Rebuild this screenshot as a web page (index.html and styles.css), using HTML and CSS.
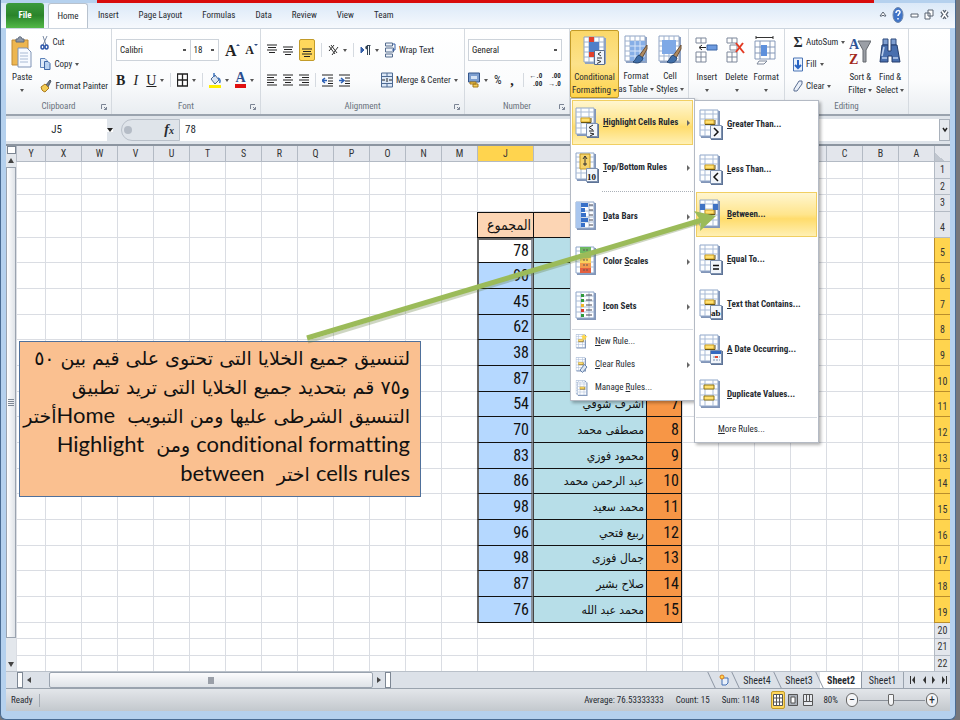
FILE: index.html
```html
<!DOCTYPE html>
<html lang="en">
<head>
    <meta charset="UTF-8">
    <meta name="viewport" content="width=device-width, initial-scale=1.0">
    <title>Conditional Formatting - Between</title>
    <link rel="stylesheet" href="styles.css">
</head>
<body>
    <svg class="defs" width="0" height="0" aria-hidden="true">
        <!-- small sheet used by all the rule icons -->
        <symbol id="sheet" viewBox="0 0 24 32">
            <path d="M2 2h19v27H2z" fill="#8296b8"/>
            <path d="M1 1h18v26H1z" fill="#fdfeff" stroke="#8fa6c9"/>
            <path d="M1 5h18M1 10h18M1 16h18M1 21h18M6 1v26M14 1v26" stroke="#a9bbd6" fill="none"/>
        </symbol>
        <symbol id="cell" viewBox="0 0 24 32">
            <use href="#sheet"/>
            <path d="M6 11h9v4H6z" fill="#ffe070" stroke="#d0a020"/>
            <path d="M6 15.500h10V11" stroke="#6b5510" fill="none"/>
        </symbol>
        <symbol id="badge" viewBox="0 0 24 32">
            <path d="M12 17h12v14H12z" fill="#5d7396"/>
            <path d="M11.500 16.500h11v13h-11z" fill="#f2f6fb" stroke="#7d90ae"/>
        </symbol>
        <symbol id="table" viewBox="0 0 24 30">
            <path d="M2 2h21v26H2z" fill="#8fa3c4"/>
            <path d="M1 1h20v25H1z" fill="#fff" stroke="#90a4c4"/>
            <path d="M1 6h20M1 11h20M1 16h20M1 21h20M6 1v25M11 1v25M16 1v25" stroke="#9fb2cf" fill="none"/>
        </symbol>
        <symbol id="brush" viewBox="0 0 24 30">
            <path d="M23 10L15 21l3 2 5-9z" fill="#b08b60" stroke="#6b5138"/>
            <path d="M15 20c-3 1-3 5-6 7 4 2 9 1 10-4z" fill="#3f6ea8" stroke="#27466f"/>
        </symbol>
        <symbol id="launch" viewBox="0 0 6 6">
            <path d="M.5 5V.5H5M3 3l2.500 2.500M5.500 3v2.500H3" stroke="#7b8494" fill="none"/>
        </symbol>
    </svg>

    <div class="window">
        <div class="redline"></div>
        <nav class="tabs">
            <button class="file">File</button>
            <button class="tab active">Home</button>
            <button class="tab">Insert</button>
            <button class="tab">Page Layout</button>
            <button class="tab">Formulas</button>
            <button class="tab">Data</button>
            <button class="tab">Review</button>
            <button class="tab">View</button>
            <button class="tab">Team</button>
            <svg class="window-buttons" width="72" height="16" viewBox="0 0 72 16">
                <path d="M2 9l3-4 3 4H6L5 8 4 9z" fill="#fff" stroke="#5a6472"/>
                <ellipse cx="20" cy="8" rx="5" ry="7.500" fill="#3f74c8" stroke="#7088ac"/>
                <path d="M18 6c0-3 4-3 4-1 0 2-2 2-2 4M20 11v1.500" stroke="#fff" stroke-width="1.500" fill="none"/>
                <path d="M33 7h7v3h-7z" fill="#fff" stroke="#5a6472"/>
                <path d="M50 3h5v6h-5zM47 6h5v6h-5z" fill="#fff" stroke="#5a6472"/>
                <path d="M64 4l5 7M69 4l-5 7" stroke="#5a6472" stroke-width="4"/>
                <path d="M64 4l5 7M69 4l-5 7" stroke="#fff" stroke-width="1.500"/>
            </svg>
        </nav>

        <div class="ribbon">
            <section class="group clipboard">
                <div class="group-body">
                    <button class="big">
                        <svg width="22" height="32" viewBox="0 0 22 32">
                            <path d="M1 4h16v25H1z" fill="#edb650" stroke="#c08a35"/>
                            <path d="M5 6V3h2c0-3 4-3 4 0h2v3z" fill="#8e98a8" stroke="#5f6a7c"/>
                            <path d="M7 12h9l4 4v15H7z" fill="#f7faff" stroke="#7f93b5"/>
                            <path d="M9 17h8M9 20h8M9 23h8M9 26h8" stroke="#a9bad4"/>
                        </svg>
                        <span>Paste</span><i class="caret"></i>
                    </button>
                    <div class="stack">
                        <button class="small">
                            <svg width="9" height="15" viewBox="0 0 9 15"><path d="M3 1l3 9M7 1L3 10" stroke="#7b8ba5" fill="none"/><ellipse cx="2.500" cy="12" rx="1.500" ry="2" fill="none" stroke="#2d56a8" stroke-width="1.500"/><ellipse cx="6.500" cy="12" rx="1.500" ry="2" fill="none" stroke="#2d56a8" stroke-width="1.500"/></svg>
                            <span>Cut</span>
                        </button>
                        <button class="small">
                            <svg width="11" height="14" viewBox="0 0 11 14"><path d="M.5 1.500H5l2 2v7H.5z" fill="#dfeaf8" stroke="#5d82b8"/><path d="M4.500 4.500H8l2 2v6H4.500z" fill="#b9d2f0" stroke="#3f68a6"/></svg>
                            <span>Copy</span><i class="caret"></i>
                        </button>
                        <button class="small">
                            <svg width="12" height="14" viewBox="0 0 12 14"><path d="M6 6l4-5 1 1-3 6z" fill="#707a88" stroke="#4f5865"/><path d="M1 8l4-3 4 4-4 4-2-1-1-1z" fill="#f3cc55" stroke="#ab7c20"/></svg>
                            <span>Format Painter</span>
                        </button>
                    </div>
                </div>
                <footer>Clipboard<svg width="6" height="6"><use href="#launch"/></svg></footer>
            </section>

            <section class="group font">
                <div class="group-body rows">
                    <div class="row">
                        <select class="font-name" aria-label="Font"><option>Calibri</option></select>
                        <select class="font-size" aria-label="Font size"><option>18</option></select>
                        <button class="serif grow">A<i></i></button>
                        <button class="serif shrink">A<i></i></button>
                    </div>
                    <div class="row">
                        <button class="serif"><b>B</b></button>
                        <button class="serif"><em>I</em></button>
                        <button class="serif"><u>U</u></button><i class="caret"></i>
                        <i class="bar"></i>
                        <button aria-label="Borders"><svg width="11" height="14"><path d="M.5 1h10v12H.5zM5.500 1v12M.5 7h10" fill="#fff" stroke="#222" stroke-width="1.300"/></svg></button><i class="caret"></i>
                        <i class="bar"></i>
                        <button aria-label="Fill colour"><svg width="12" height="16" viewBox="0 0 12 16"><path d="M2 7l4-4 4 5-4 4z" fill="#d9e4f2" stroke="#4d6a93"/><path d="M5 5V1M9 6c3 1 2 4 1.500 5" stroke="#3e74bd" stroke-width="1.500" fill="none"/><path d="M0 13h12v3H0z" fill="#ffef00"/></svg></button><i class="caret"></i>
                        <button class="serif font-color">A</button><i class="caret"></i>
                    </div>
                </div>
                <footer>Font<svg width="6" height="6"><use href="#launch"/></svg></footer>
            </section>

            <section class="group alignment">
                <div class="group-body rows">
                    <div class="row">
                        <button aria-label="Top"><svg width="10" height="14"><path d="M0 2h10M1 4.500h8M0 7h10M2 9.500h6" stroke="#222"/></svg></button>
                        <button aria-label="Middle"><svg width="10" height="14"><path d="M0 4h10M1 6.500h8M0 9h10M2 11.500h6" stroke="#222"/></svg></button>
                        <button class="pressed" aria-label="Bottom"><svg width="10" height="14"><path d="M0 6h10M1 8.500h8M0 11h10M2 13.500h6" stroke="#222"/></svg></button>
                        <i class="bar"></i>
                        <button aria-label="Orientation"><svg width="11" height="14"><path d="M1 3l6 8M3 2l6 8M1 8l5-6M4 12l6-8" stroke="#333" fill="none"/></svg></button><i class="caret"></i>
                        <i class="bar"></i>
                        <button aria-label="Direction"><svg width="11" height="12"><path d="M1 3l3 3-3 3z" fill="#345fa8" stroke="#345fa8"/><path d="M9.500 2v9M7.500 2v9M10.500 1.500H7" stroke="#345" fill="none"/><path d="M7.500 1.500c-3 0-3 4 0 4z" fill="#345"/></svg></button><i class="caret"></i>
                        <button class="small">
                            <svg width="11" height="16" viewBox="0 0 11 16"><path d="M.5 1h7v3h-7zM.5 6h8v4h-8zM.5 12h7v3h-7z" fill="#eef3fa" stroke="#536a8c"/><path d="M8 2h2v6H7" stroke="#345fa8" fill="none"/></svg>
                            <span>Wrap Text</span>
                        </button>
                    </div>
                    <div class="row">
                        <button aria-label="Left"><svg width="10" height="13"><path d="M0 1h10M0 3.500h7M0 6h10M0 8.500h7M0 11h10" stroke="#222"/></svg></button>
                        <button aria-label="Center"><svg width="10" height="13"><path d="M0 1h10M2 3.500h6M0 6h10M2 8.500h6M0 11h10" stroke="#222"/></svg></button>
                        <button aria-label="Right"><svg width="10" height="13"><path d="M0 1h10M3 3.500h7M0 6h10M3 8.500h7M0 11h10" stroke="#222"/></svg></button>
                        <i class="bar"></i>
                        <button aria-label="Outdent"><svg width="11" height="13"><path d="M0 1h11M6 4h5M6 7h5M6 9.500h5M0 12h11" stroke="#222"/><path d="M5 6.500H1M3 4L0 6.500 3 9" stroke="#2b5fb5" stroke-width="1.500" fill="none"/></svg></button>
                        <button aria-label="Indent"><svg width="11" height="13"><path d="M0 1h11M6 4h5M6 7h5M6 9.500h5M0 12h11" stroke="#222"/><path d="M0 6.500h4M2 4l3 2.500L2 9" stroke="#2b5fb5" stroke-width="1.500" fill="none"/></svg></button>
                        <button class="small">
                            <svg width="12" height="16" viewBox="0 0 12 16"><path d="M.5 1h11v14H.5zM.5 4.500h11M.5 11.500h11M6 1v3.500M6 11.500V15" fill="#dce8f7" stroke="#4d6a93"/><path d="M1 8h3M11 8H8M6 6v4" stroke="#222"/></svg>
                            <span>Merge &amp; Center</span><i class="caret"></i>
                        </button>
                    </div>
                </div>
                <footer>Alignment<svg width="6" height="6"><use href="#launch"/></svg></footer>
            </section>

            <section class="group number">
                <div class="group-body rows">
                    <div class="row">
                        <select class="format" aria-label="Number format"><option>General</option></select>
                    </div>
                    <div class="row">
                        <button aria-label="Accounting"><svg width="12" height="16" viewBox="0 0 12 16"><path d="M.5 1h11v9H.5z" fill="#7d9fd0" stroke="#34568c"/><path d="M3 4h6v3H3z" fill="#d5e3f5"/><path d="M2 10h6v2H2zM5 12h5v3H5z" fill="#f6cf58" stroke="#a57b1b"/></svg></button><i class="caret"></i>
                        <button class="percent">%</button>
                        <button class="serif comma"><b>,</b></button>
                        <i class="bar"></i>
                        <button aria-label="Increase decimal" class="decimal"><span>&larr;.0</span><span>.00</span></button>
                        <button aria-label="Decrease decimal" class="decimal"><span>.00</span><span>&rarr;.0</span></button>
                    </div>
                </div>
                <footer>Number<svg width="6" height="6"><use href="#launch"/></svg></footer>
            </section>

            <section class="group styles">
                <div class="group-body">
                    <div class="dropdown">
                        <button class="big open">
                            <svg width="24" height="30" viewBox="0 0 24 30"><use href="#table"/><path d="M6 1h5v5H6zM6 16h5v5H6z" fill="#e2402b"/><path d="M6 6h10v10H6z" fill="#4f7fc8"/><path d="M11.500 14.500h10v14h-10z" fill="#eef3fa" stroke="#596f91"/><path d="M18 16l-3 2 3 2M14 22h5M14 24l4 1.500-4 2" stroke="#333" fill="none"/></svg>
                            <span>Conditional</span><span>Formatting<i class="caret"></i></span>
                        </button>

                        <div class="menu">
                            <button class="item hot"><svg width="24" height="32"><use href="#cell"/><use href="#badge"/><path d="M18 18l-4 2.500 4 2.500M14 24h5M15 26l4 1-4 2" stroke="#222" fill="none"/></svg><span><u>H</u>ighlight Cells Rules</span></button>
                            <button class="item"><svg width="24" height="32"><use href="#sheet"/><path d="M5 2h10v15H5z" fill="#f5d36a" stroke="#c49a25"/><path d="M10 14V4M8 7l2-3 2 3M8 12h4" stroke="#333" fill="none"/><use href="#badge"/><text x="12" y="28" class="badge-text">10</text></svg><span><u>T</u>op/Bottom Rules</span></button>
                            <hr class="dotted">
                            <button class="item"><svg width="24" height="32"><use href="#sheet"/><path d="M1 1h5v26H1z" fill="#a9c6ee"/><path d="M6 2h7v4H6zM6 7h4v4H6zM6 12h5v4H6zM6 17h7v4H6zM6 22h4v4H6z" fill="#3770c8"/><path d="M14 4h4M14 9h4M14 14h4M14 19h4M14 24h4" stroke="#445"/></svg><span><u>D</u>ata Bars</span></button>
                            <button class="item"><svg width="24" height="32"><use href="#sheet"/><path d="M5 1h11v6H5z" fill="#6eb862"/><path d="M5 7h11v5H5z" fill="#bfd468"/><path d="M5 12h11v5H5z" fill="#f8d25d"/><path d="M5 17h11v5H5z" fill="#f2994c"/><path d="M5 22h11v5H5z" fill="#e4603f"/><path d="M8 4h6M8 9h6M8 14h6M8 19h6M8 24h6" stroke="#655" stroke-dasharray="2 1"/></svg><span>Color <u>S</u>cales</span></button>
                            <button class="item"><svg width="24" height="32"><use href="#sheet"/><path d="M6 3h3v3H6zM6 8h3v3H6z" fill="#2f9a3c"/><path d="M6 13h3v3H6z" fill="#efb52b"/><path d="M6 18h3v3H6z" fill="#db3a2a"/><path d="M6 23h3v3H6z" fill="#2f9a3c"/><path d="M11 4h6M11 9h6M11 14h6M11 19h6M11 24h6" stroke="#445"/></svg><span><u>I</u>con Sets</span></button>
                            <hr>
                            <button class="item thin"><svg width="13" height="16" viewBox="0 0 24 32"><use href="#cell"/><path d="M17 0l2 4 5 1-4 3 1 5-4-3-4 2 1-5-3-3 4-1z" fill="#ffd84a"/></svg><span><u>N</u>ew Rule...</span></button>
                            <button class="item thin arrow"><svg width="13" height="16" viewBox="0 0 24 32"><use href="#cell"/><path d="M9 26l9-11 5 5-9 11z" fill="#dce6f3" stroke="#6581aa" stroke-width="2"/></svg><span><u>C</u>lear Rules</span></button>
                            <button class="item thin"><svg width="13" height="16" viewBox="0 0 24 32"><use href="#sheet"/><use href="#cell" x="3" y="3"/></svg><span>Manage <u>R</u>ules...</span></button>
                        </div>

                        <div class="menu submenu">
                            <button class="item"><svg width="24" height="32"><use href="#cell"/><use href="#badge"/><path d="M15 19l4 4-4 4" stroke="#111" stroke-width="1.500" fill="none"/></svg><span><u>G</u>reater Than...</span></button>
                            <button class="item"><svg width="24" height="32"><use href="#cell"/><use href="#badge"/><path d="M19 19l-4 4 4 4" stroke="#111" stroke-width="1.500" fill="none"/></svg><span><u>L</u>ess Than...</span></button>
                            <button class="item hot"><svg width="24" height="32"><use href="#cell"/><path d="M1 5h5v6H1zM14 5h5v6h-5z" fill="#3f72c4"/></svg><span><u>B</u>etween...</span></button>
                            <button class="item"><svg width="24" height="32"><use href="#cell"/><use href="#badge"/><path d="M14 21.500h6M14 25h6" stroke="#111" stroke-width="1.500"/></svg><span><u>E</u>qual To...</span></button>
                            <button class="item"><svg width="24" height="32"><use href="#cell"/><use href="#badge"/><text x="12" y="27" class="badge-text">ab</text></svg><span><u>T</u>ext that Contains...</span></button>
                            <button class="item"><svg width="24" height="32"><use href="#cell"/><use href="#badge"/><path d="M12 17h10v3H12z" fill="#3468c0"/><path d="M14 23h7M14 26h7" stroke="#7b8fb0" stroke-dasharray="2 1"/><path d="M16 22h3v2h-3z" fill="#e04a36"/></svg><span><u>A</u> Date Occurring...</span></button>
                            <button class="item"><svg width="24" height="32"><use href="#sheet"/><path d="M5 6h10v4H5zM5 17h10v4H5z" fill="#ffe070" stroke="#8f7415"/></svg><span><u>D</u>uplicate Values...</span></button>
                            <hr>
                            <button class="item thin more"><span><u>M</u>ore Rules...</span></button>
                        </div>
                    </div>
                    <button class="big">
                        <svg width="24" height="30" viewBox="0 0 24 30"><use href="#table"/><path d="M6 6h15v20H6z" fill="#86aee6"/><path d="M6 11h15M6 16h15M6 21h15M11 6v20M16 6v20" stroke="#d7e5f8"/><use href="#brush"/></svg>
                        <span>Format</span><span>as Table<i class="caret"></i></span>
                    </button>
                    <button class="big">
                        <svg width="24" height="30" viewBox="0 0 24 30"><use href="#table"/><path d="M4 5h14v14H4z" fill="#7fa9e6"/><use href="#brush"/></svg>
                        <span>Cell</span><span>Styles<i class="caret"></i></span>
                    </button>
                </div>
                <footer></footer>
            </section>

            <section class="group cells">
                <div class="group-body">
                    <button class="big">
                        <svg width="24" height="30" viewBox="0 0 24 30"><path d="M1 2h10v5H1zM1 16h10v10H1zM6 2v5M6 16v10M1 21h10" fill="#fff" stroke="#7c879a"/><path d="M12 9h10v5H12z" fill="#6d9be0" stroke="#3d66a6"/><path d="M11 11.500H5M7 9l-3 2.500L7 14" stroke="#222" fill="none"/></svg>
                        <span>Insert</span><i class="caret"></i>
                    </button>
                    <button class="big">
                        <svg width="24" height="30" viewBox="0 0 24 30"><path d="M2 2h10v5H2zM2 16h10v10H2zM7 2v5M7 16v10M2 21h10M5 9h7v5H5z" fill="#fff" stroke="#7c879a"/><path d="M11 7l8 10M18 7l-7 9" stroke="#e33b24" stroke-width="2"/></svg>
                        <span>Delete</span><i class="caret"></i>
                    </button>
                    <button class="big">
                        <svg width="24" height="30" viewBox="0 0 24 30"><path d="M1 5h20v18H1zM1 11h20M1 17h20M6 5v18M16 5v18" fill="#fff" stroke="#8598b8"/><path d="M7 9h6v11H7z" fill="#5e90dc"/><path d="M2 1.500h17M2 0v3M19 0v3" stroke="#333"/><path d="M5 25h8l-3 3H3z" fill="#fff" stroke="#7c879a"/></svg>
                        <span>Format</span><i class="caret"></i>
                    </button>
                </div>
                <footer></footer>
            </section>

            <section class="group editing">
                <div class="group-body">
                    <div class="stack">
                        <button class="small"><b class="sigma">&Sigma;</b><span>AutoSum</span><i class="caret"></i></button>
                        <button class="small"><svg width="10" height="15"><path d="M.5 1h9v13h-9z" fill="#eaf2fd" stroke="#4b74b5"/><path d="M5 3v8M2 8l3 3 3-3" stroke="#2965c4" stroke-width="2" fill="none"/></svg><span>Fill</span><i class="caret"></i></button>
                        <button class="small"><svg width="10" height="14"><path d="M1 10l5-8h3v3l-5 7H1z" fill="#e9eff8" stroke="#5b6f92"/></svg><span>Clear</span><i class="caret"></i></button>
                    </div>
                    <button class="big">
                        <svg width="22" height="30" viewBox="0 0 22 30"><path d="M9 5h13l-5 9v12h-3V14z" fill="#9b9fa6" stroke="#65696f"/><text x="0" y="13" class="az a">A</text><text x="0" y="28" class="az z">Z</text></svg>
                        <span>Sort &amp;</span><span>Filter<i class="caret"></i></span>
                    </button>
                    <button class="big">
                        <svg width="22" height="30" viewBox="0 0 22 30"><path d="M4 3h5v6H4zM12 3h5v6h-5z" fill="#7f9ed0" stroke="#2f4a7c"/><path d="M3 9h6v6h3V9h6l3 17h-8v-6H9v6H1z" fill="#496fae" stroke="#243d6c"/><path d="M3 22h5M14 22h5M5 11l-2 9" stroke="#bcd0ee" stroke-width="1.500"/></svg>
                        <span>Find &amp;</span><span>Select<i class="caret"></i></span>
                    </button>
                </div>
                <footer>Editing</footer>
            </section>
        </div>

        <div class="formula-bar">
            <input class="name-box" aria-label="Name box" value="J5"><i class="caret dark"></i>
            <div class="fx"><i class="knob"></i><em>f<small>x</small></em></div>
            <input class="formula" aria-label="Formula" value="78">
            <button class="expand" aria-label="Expand"><svg width="6" height="6"><path d="M1 1l2 3 2-3" stroke="#222" stroke-width="1.500" fill="none"/></svg></button>
        </div>

        <main class="sheet-area">
            <div class="scroll-y">
                <button class="split" aria-label="Split"></button>
                <i class="tri up"></i>
                <div class="thumb"><svg width="6" height="8"><path d="M0 .5h6M0 2.500h6M0 4.500h6M0 6.500h6" stroke="#7d8794"/></svg></div>
                <i class="tri down"></i>
            </div>
            <table class="cells-table" dir="rtl" id="grid"></table>

            <div class="callout" dir="rtl" lang="ar">
                <p>لتنسيق جميع الخلايا التى تحتوى على قيم بين ٥٠</p>
                <p>و٧٥ قم بتحديد جميع الخلايا التى تريد تطبيق</p>
                <p>التنسيق الشرطى عليها ومن التبويب &nbsp;<span lang="en">Home</span>أختر</p>
                <p><span lang="en">conditional formatting</span> ومن &nbsp;<span lang="en">Highlight</span></p>
                <p><span lang="en">cells rules</span> اختر &nbsp;<span lang="en">between</span></p>
            </div>
        </main>

        <div class="bottom-bar">
            <button class="split-x" aria-label="Split"></button>
            <i class="tri left"></i>
            <div class="scroll-x"><i></i></div>
            <i class="tri right"></i>
            <button class="split-x" aria-label="Split"></button>
            <div class="sheets">
                <button class="sheet-tab" aria-label="New sheet"><svg width="10" height="12"><path d="M3 4h6v5l-2 2H3z" fill="#e8f0fb" stroke="#4470b5"/><circle cx="3" cy="3" r="2" fill="#ffd44d" stroke="#d97b1e"/></svg></button>
                <button class="sheet-tab">Sheet4</button>
                <button class="sheet-tab">Sheet3</button>
                <button class="sheet-tab current">Sheet2</button>
                <button class="sheet-tab">Sheet1</button>
            </div>
            <svg class="sheet-nav" width="38" height="8"><path d="M5 0v8L2 4zM0 0h1v8H0zM16 0v8l-3-4zM22 0v8l3-4zM32 0v8l3-4zM36 0h1v8h-1z" fill="#333"/></svg>
        </div>

        <footer class="status">
            <span class="ready">Ready</span>
            <span class="push">Average: 76.53333333</span>
            <span>Count: 15</span>
            <span>Sum: 1148</span>
            <div class="views">
                <button class="on" aria-label="Normal"><svg width="10" height="12"><path d="M.5.5h9v11h-9zM.5 4h9M.5 8h9M3.500.5v11M6.500.5v11" fill="#fff" stroke="#555"/></svg></button>
                <button aria-label="Page layout"><svg width="10" height="12"><path d="M.5.5h9v11h-9z" fill="#aab0b8" stroke="#555"/><path d="M3 3h4v6H3z" fill="#fff" stroke="#555"/></svg></button>
                <button aria-label="Page break"><svg width="10" height="12"><path d="M.5.5h9v11h-9zM3.500.5V7M6.500.5V7M.5 7.500h9" fill="#e6e9ed" stroke="#555"/></svg></button>
            </div>
            <span>80%</span>
            <div class="zoom">
                <button aria-label="Zoom out">&minus;</button>
                <input type="range" min="0" max="100" value="48" aria-label="Zoom">
                <button aria-label="Zoom in">+</button>
            </div>
        </footer>

        <svg class="pointer" width="960" height="720">
            <path d="M308 342L700 223" stroke="#5f7a38" stroke-width="3" opacity=".3"/>
            <path d="M307 338L702 220" stroke="#9bbb59" stroke-width="5"/>
            <path d="M694 211l22 5-16 15 1-10z" fill="#9bbb59"/>
        </svg>
    </div>

    <script>
        const columns = ['A', 'B', 'C', 'D', 'E', 'F', 'G', 'H', 'I', 'J', 'M', 'N', 'O', 'P', 'Q', 'R', 'S', 'T', 'U', 'V', 'W', 'X', 'Y'];
        const scores = [78, 90, 45, 62, 38, 87, 54, 70, 83, 86, 98, 96, 98, 87, 76];
        const names = {
            7: 'أشرف شوقي',
            8: 'مصطفى محمد',
            9: 'محمود فوزي',
            10: 'عبد الرحمن محمد',
            11: 'محمد سعيد',
            12: 'ربيع فتحي',
            13: 'جمال فوزى',
            14: 'صلاح بشير',
            15: 'محمد عبد الله'
        };

        function cell(col, row) {
            const n = row - 4;
            if (row === 4 && ['H', 'I', 'J'].includes(col)) {
                return `<td class="title">${col === 'J' ? 'المجموع' : ''}</td>`;
            }
            if (n >= 1 && n <= 15) {
                if (col === 'H') return `<td class="num">${n}</td>`;
                if (col === 'I') return `<td class="name">${names[n] || ''}</td>`;
                if (col === 'J') return `<td class="score">${scores[n - 1]}</td>`;
            }
            return '<td></td>';
        }

        let html = '<tr><th class="corner"></th>';
        html += columns.map(c => `<th class="col-${c}">${c}</th>`).join('') + '</tr>';
        for (let row = 1; row <= 22; row++) {
            const tall = row >= 4 && row <= 19;
            const selected = row >= 5 && row <= 19;
            html += `<tr class="${tall ? 'tall' : 'short'} ${selected ? 'selected' : ''}"><th>${row}</th>`;
            html += columns.map(c => cell(c, row)).join('') + '</tr>';
        }
        document.getElementById('grid').innerHTML = html;
    </script>
</body>
</html>
```
FILE: styles.css
```css
* {
    box-sizing: border-box;
}
body {
    margin: 0;
    background: #77777a;
    font-family: "Roboto Condensed", "Open Sans Condensed", Roboto, "Liberation Sans", sans-serif;
    font-size: 9px;
    line-height: 13px;
    color: #262b31;
}
button, input, select {
    font: inherit;
    color: inherit;
    margin: 0;
    padding: 0;
    border: 0;
    background: none;
    white-space: nowrap;
}
svg {
    display: block;
    flex: none;
}
.defs {
    position: absolute;
}
.window {
    position: relative;
    display: flex;
    flex-direction: column;
    height: 100vh;
    margin-right: 4px;
    padding: 0 5px 8px;
    border: 1px solid #4a6c93;
    border-width: 0 1px 1px;
    border-radius: 0 0 6px 6px;
    background: #b5d1ee;
    overflow: hidden;
}
.redline {
    height: 3px;
    margin: 0 76px 0 91px;
    background: #d80c0c;
}
.caret {
    display: inline-block;
    flex: none;
    border: 2px solid transparent;
    border-top: 3px solid #555;
    border-bottom: 0;
    margin-left: 3px;
    vertical-align: middle;
}
.caret.dark {
    border-width: 4px 3px 0;
    border-top-color: #222;
}

/* tabs */
.tabs {
    display: flex;
    height: 25px;
    margin: 0 -5px;
    padding: 0 5px;
    background: linear-gradient(#dbe9f8, #f6f9fd);
}
.file {
    width: 38px;
    margin-right: 4px;
    border-radius: 3px 3px 0 0;
    background: linear-gradient(#3c9a3c, #2a842a 50%, #52b848);
    color: #fff;
    font-weight: bold;
}
.tab {
    padding: 0 10px;
}
.tab.active {
    width: 40px;
    border: 1px solid #b8c2ce;
    border-bottom: 0;
    border-radius: 3px 3px 0 0;
    background: #fff;
    padding: 0;
}
.window-buttons {
    margin: 4px 0 0 auto;
}

/* ribbon */
.ribbon {
    display: flex;
    height: 88px;
    border-top: 1px solid #ccd5df;
    border-bottom: 2px solid #9aa3ae;
    background: linear-gradient(#fff, #fbfcfd 60%, #e9edf1);
}
.group {
    display: flex;
    flex-direction: column;
    border-right: 1px solid #d5dae0;
    padding: 2px 3px 0;
}
.clipboard { width: 106px; }
.font { width: 149px; }
.alignment { width: 204px; }
.number { width: 105px; }
.styles { width: 119px; padding: 1px 1px 0 0; }
.cells { width: 96px; }
.editing { width: 124px; }
.group-body {
    display: flex;
    height: 69px;
}
.group footer {
    position: relative;
    text-align: center;
    color: #69717c;
}
.group footer svg {
    position: absolute;
    right: 1px;
    top: 4px;
}
.big {
    display: flex;
    flex-direction: column;
    align-items: center;
    flex: 1;
    min-width: 0;
    padding-top: 5px;
    line-height: 13px;
}
.big svg {
    margin-bottom: 5px;
}
.clipboard .big svg {
    margin-bottom: 3px;
}
.big .caret {
    margin: 0 0 0 2px;
}
.big > .caret {
    margin: 5px 0 0;
}
.big.open {
    width: 49px;
    height: 68px;
    border: 1px solid #c29b29;
    border-radius: 2px;
    background: linear-gradient(#fbd86a, #fce28a 50%, #ffd34a);
}
.stack {
    display: flex;
    flex-direction: column;
    padding-left: 5px;
}
.small {
    display: flex;
    align-items: center;
    gap: 3px;
    height: 22px;
}
.small .caret {
    margin: 0;
}
.sigma {
    font-family: "Liberation Serif", serif;
    font-size: 14px;
    width: 10px;
}
.rows {
    flex-direction: column;
    padding-top: 8px;
    gap: 8px;
}
.row {
    display: flex;
    align-items: center;
    height: 22px;
    gap: 6px;
}
.row .caret {
    margin-left: -2px;
}
.row .small {
    width: 80px;
    margin-left: auto;
}
.row .small .caret {
    margin: 0;
}
.bar {
    width: 1px;
    height: 14px;
    background: #d5dae0;
}
.row select {
    height: 22px;
    padding: 0 3px;
    border: 1px solid #cdd3da;
    background: #fff linear-gradient(#555, #555) no-repeat right 4px center / 3px 2px;
    appearance: none;
    color: #222;
}
.row .font-name { width: 80px; }
.row .font-size { width: 31px; margin-left: -7px; }
.row .format { width: 94px; }
.serif {
    font-family: "Liberation Serif", serif;
    font-size: 14px;
    color: #222;
    min-width: 9px;
}
.grow, .shrink {
    display: flex;
    font-weight: bold;
}
.grow i, .shrink i {
    border: 2px solid transparent;
    height: 2px;
}
.grow i { border-top: 0; border-bottom-color: #2d4d86; }
.shrink i { border-bottom: 0; border-top-color: #2d4d86; }
.grow { font-size: 16px; }
.shrink { font-size: 12px; }
.font .row {
    padding-left: 1px;
}
.font-color {
    border-bottom: 4px solid #e01010;
    line-height: 12px;
    font-weight: bold;
    color: #2c4f8f;
}
.pressed {
    width: 16px;
    height: 22px;
    padding: 0 2px;
    border: 1px solid #c29b29;
    border-radius: 2px;
    background: #ffd75c;
}
.alignment .row {
    padding-left: 3px;
}
.decimal {
    display: flex;
    flex-direction: column;
    font-size: 7px;
    line-height: 8px;
    font-weight: bold;
    align-items: flex-end;
}
.percent {
    font-size: 12px;
}
.comma {
    text-align: center;
}
.badge-text {
    font: bold 9px "Liberation Serif", serif;
    fill: #111;
}
.az {
    font: bold 14px "Liberation Serif", serif;
}
.a { fill: #2f5597; }
.z { fill: #a3281c; }

/* menus */
.dropdown {
    position: relative;
}
.menu {
    position: absolute;
    z-index: 2;
    top: 68px;
    left: 0;
    width: 125px;
    padding: 1px;
    border: 1px solid #b4bac4;
    background: #fff;
    box-shadow: 2px 2px 3px rgba(0,0,0,0.3);
}
.submenu {
    top: 70px;
    left: 124px;
}
.item {
    display: flex;
    align-items: center;
    gap: 4px;
    width: 100%;
    height: 45px;
    padding: 0 2px;
    font-weight: bold;
    text-align: left;
    border: 1px solid transparent;
}
.item.hot {
    border-color: #f1cf62;
    background: linear-gradient(#fff6d0, #ffe58c 50%, #ffdc6c 60%, #fff0b4);
}
.menu:not(.submenu) .item:not(.thin)::after,
.item.arrow::after {
    content: "";
    margin-left: auto;
    border: 3px solid transparent;
    border-left-color: #666;
    border-right: 0;
}
.item.thin {
    height: 23px;
    gap: 7px;
    font-weight: normal;
}
.item.more {
    padding-left: 21px;
}
.menu hr {
    height: 1px;
    margin: 0;
    border: 0;
    background: #d8dce2;
}
.menu hr.dotted {
    margin: 1px 0 2px 30px;
    background: none;
    border-top: 1px dotted #aab0b8;
}

/* formula bar */
.formula-bar {
    display: flex;
    align-items: center;
    height: 30px;
    padding: 3px 0 4px;
    background: #dfe4ea;
    border-bottom: 2px solid #8c95a0;
}
.formula-bar > * {
    background: #fff;
}
.name-box {
    width: 101px;
    height: 22px;
    text-align: center;
    font-size: 11px;
}
.formula-bar > .caret {
    margin: 0;
    border-width: 9px 4px;
    border-color: #fff;
    border-top-color: #222;
    border-width: 4px 3px 0;
    box-shadow: none;
}
.fx {
    display: flex;
    align-items: center;
    justify-content: space-between;
    width: 59px;
    height: 22px;
    margin-left: 8px;
    padding: 0 5px 0 2px;
    border: 1px solid #b9c0c9;
    border-radius: 11px 0 0 11px;
    background: #dfe4ea;
    font: bold 14px "Liberation Serif", serif;
}
.fx small {
    font-size: 10px;
}
.knob {
    width: 8px;
    height: 8px;
    border-radius: 4px;
    background: #b5bcc6;
}
.formula {
    flex: 1;
    height: 22px;
    padding-left: 5px;
    font-size: 11px;
}
.expand {
    display: flex;
    align-items: center;
    justify-content: center;
    width: 11px;
    height: 22px;
    border: 1px solid #a9b1bb;
    background: #e6eaef;
}

/* grid */
.sheet-area {
    position: relative;
    display: flex;
    flex: 1;
    min-height: 0;
    overflow: hidden;
    background: #fff;
}
.scroll-y {
    display: flex;
    flex-direction: column;
    align-items: center;
    gap: 4px;
    width: 10px;
    background: #e3e7ec;
}
.split {
    width: 9px;
    height: 8px;
    border: 1px solid #7d8794;
    background: #fff;
}
.tri {
    flex: none;
    border: 3px solid transparent;
}
.tri.up { border-top: 0; border-bottom: 5px solid #444; }
.tri.down { border-bottom: 0; border-top: 5px solid #444; margin-bottom: 4px; }
.tri.left { border-left: 0; border-right: 4px solid #444; }
.tri.right { border-right: 0; border-left: 4px solid #444; }
.thumb {
    display: flex;
    align-items: center;
    justify-content: center;
    flex: 1;
    width: 10px;
    margin-bottom: 20px;
    border: 1px solid #9aa3af;
    background: linear-gradient(90deg, #fff, #dfe3e8);
}
.cells-table {
    flex: 1;
    width: 0;
    table-layout: fixed;
    border-spacing: 0;
    align-self: flex-start;
}
.cells-table th, .cells-table td {
    padding: 0;
    border-left: 1px solid #dadde3;
    border-bottom: 1px solid #dadde3;
    overflow: hidden;
    white-space: nowrap;
}
.cells-table th {
    width: 36px;
    height: 16px;
    border-color: #b3bac4;
    background: #e3e6ec;
    font-size: 10px;
    font-weight: normal;
    line-height: 12px;
    color: #333;
}
.cells-table th.corner {
    width: 16px;
    background: linear-gradient(45deg, #c0c6cf 30%, #e3e6ec 30%);
}
.cells-table th.col-I { width: 113px; }
.cells-table th.col-J {
    width: 56px;
    background: #ffd44e;
}
.cells-table th.col-Y { width: auto; }
.short { height: 16px; }
.short:nth-child(even) { height: 17px; }
.tall { height: 26px; }
.tall:nth-child(3n) { height: 25px; }
.cells-table .tall th {
    padding-top: 6px;
}
.cells-table .selected th {
    background: #ffd44e;
    border-color: #b98d2c;
}
.cells-table td.title, .cells-table td.name,
.cells-table td.num, .cells-table td.score {
    border-color: #111;
    padding: 0 2px;
    line-height: 20px;
    color: #111;
}
.cells-table .title {
    background: #fcd5b4;
    border-top: 1px solid #111;
    font: 14px "DejaVu Sans Condensed", "DejaVu Sans", sans-serif;
}
.cells-table .name {
    background: #b7dee8;
    text-align: right;
    font: 12px "DejaVu Sans Condensed", "DejaVu Sans", sans-serif;
}
.cells-table td.name {
    border-left-color: #444;
}
.cells-table .num {
    background: #f79646;
    border-right: 1px solid #111;
    direction: ltr;
    text-align: right;
    font-size: 16px;
}
.cells-table td.score {
    background: #b5d8ff;
    border-left: 2px solid #666;
    border-right: 2px solid #8a9099;
    text-align: right;
    font-size: 16px;
}
.cells-table tr:nth-child(6) td.score {
    background: #fff;
    border-top: 2px solid #666;
}

.callout {
    position: absolute;
    z-index: 1;
    left: 13px;
    top: 195px;
    width: 402px;
    height: 156px;
    padding: 2px 10px;
    border: 1px solid #4f709b;
    background: #fac090;
    color: #111;
    font: 19px/29px "DejaVu Sans", sans-serif;
}
.callout p {
    height: 29px;
    margin: 0;
    white-space: nowrap;
}
.callout span {
    font: 22px/24px Lato, sans-serif;
    font-variant-ligatures: none;
}
.pointer {
    position: absolute;
    z-index: 3;
    left: -1px;
    top: 0;
    pointer-events: none;
}

/* bottom */
.bottom-bar {
    display: flex;
    align-items: center;
    gap: 4px;
    height: 18px;
    padding-left: 11px;
    border-top: 1px solid #b9c0c9;
    border-bottom: 1px solid #9aa3ae;
    background: #dce1e8;
}
.split-x {
    width: 6px;
    height: 16px;
    border: 1px solid #7d8794;
    background: #fff;
}
.scroll-x {
    display: flex;
    align-items: center;
    justify-content: center;
    width: 324px;
    height: 16px;
    margin-left: 14px;
    border: 1px solid #9aa3af;
    border-radius: 2px;
    background: linear-gradient(#fbfbfd, #dfe3e8);
}
.scroll-x i {
    width: 6px;
    height: 7px;
    background: #9a9fa8;
}
.sheets {
    display: flex;
    height: 16px;
    margin-left: auto;
}
.sheet-tab {
    position: relative;
    display: flex;
    align-items: center;
    justify-content: center;
    width: 42px;
    font-size: 10px;
}
.sheet-tab:first-child {
    width: 24px;
}
/* slanted divider on the left of each tab */
.sheet-tab::before {
    content: "";
    position: absolute;
    left: -1px;
    top: 0;
    width: 1px;
    height: 16px;
    background: #8d96a3;
    transform: skewX(25deg);
}
.sheet-tab:last-child {
    border-right: 1px solid #9aa3ae;
}
.sheet-tab:last-child::before {
    transform: none;
}
.sheet-tab.current {
    background: #fff;
    font-weight: bold;
}
.sheet-nav {
    margin: 0 2px;
}
.status {
    display: flex;
    align-items: center;
    gap: 12px;
    height: 22px;
    padding: 0 6px 0 5px;
    background: linear-gradient(#e3e6ea, #c3c8cd);
}
.ready {
    padding-right: 6px;
    border-right: 1px solid #a5abb3;
}
.status .push {
    margin-left: auto;
}
.views {
    display: flex;
    gap: 1px;
    margin-right: -4px;
}
.views button {
    padding: 2px 1px;
    border: 1px solid transparent;
}
.views .on {
    border-color: #c29b29;
    border-radius: 2px;
    background: #ffd75c;
}
.zoom {
    display: flex;
    align-items: center;
    gap: 1px;
    margin: 0 6px 0 -4px;
}
.zoom button {
    width: 12px;
    height: 14px;
    border: 1px solid #666;
    border-radius: 6px;
    background: #f4f5f7;
    font-size: 12px;
    line-height: 10px;
}
.zoom input {
    width: 66px;
    height: 12px;
    appearance: none;
    background: linear-gradient(#8a9099, #8a9099) no-repeat center / 100% 1px;
}
.zoom input::-webkit-slider-thumb {
    appearance: none;
    width: 6px;
    height: 12px;
    border: 1px solid #666;
    border-radius: 1px 1px 3px 3px;
    background: #f4f5f7;
}
```
